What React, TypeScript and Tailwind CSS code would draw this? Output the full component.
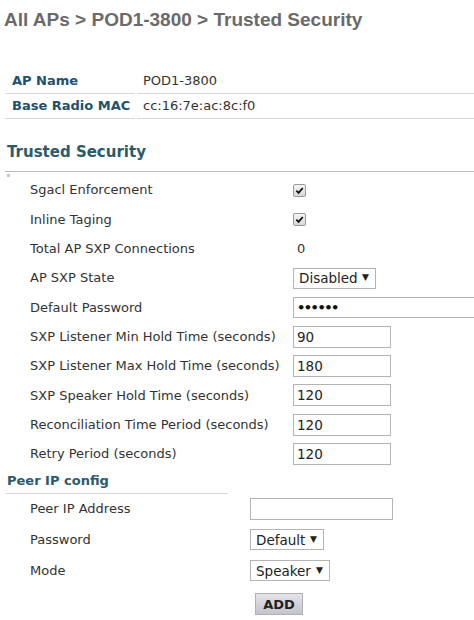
const rows: { label: string; kind: "check" | "text" | "select" | "password" | "input"; value?: string }[] = [
  { label: "Sgacl Enforcement", kind: "check" },
  { label: "Inline Taging", kind: "check" },
  { label: "Total AP SXP Connections", kind: "text", value: "0" },
  { label: "AP SXP State", kind: "select", value: "Disabled" },
  { label: "Default Password", kind: "password", value: "••••••" },
  { label: "SXP Listener Min Hold Time (seconds)", kind: "input", value: "90" },
  { label: "SXP Listener Max Hold Time (seconds)", kind: "input", value: "180" },
  { label: "SXP Speaker Hold Time (seconds)", kind: "input", value: "120" },
  { label: "Reconciliation Time Period (seconds)", kind: "input", value: "120" },
  { label: "Retry Period (seconds)", kind: "input", value: "120" },
];

function Check() {
  return (
    <span className="flex h-[13px] w-[13px] items-center justify-center rounded-[2px] border border-[#9a9a9a] bg-gradient-to-b from-[#f4f4f4] to-[#d8d8d8]">
      <svg viewBox="0 0 10 10" className="h-[9px] w-[9px]">
        <path d="M1.5 5.2 L4 7.6 L8.6 2.2" fill="none" stroke="#111" strokeWidth="2" />
      </svg>
    </span>
  );
}

function Select({ value, w }: { value: string; w: string }) {
  return (
    <span className={`flex h-[21px] ${w} shrink-0 items-center justify-between border border-[#b4b4b4] bg-white pl-[5px] pr-[6px] text-[13.5px] text-[#222]`}>
      {value}
      <span className="text-[9px]">▼</span>
    </span>
  );
}

function Field({ value, w }: { value: string; w: string }) {
  return (
    <span className={`flex h-[22px] ${w} shrink-0 items-center border border-[#b4b4b4] bg-white pl-[3px] text-[13.5px] text-[#222]`}>
      {value}
    </span>
  );
}

export default function App() {
  return (
    <div className="h-[620px] w-[474px] overflow-hidden bg-white font-['DejaVu_Sans',Verdana,sans-serif] text-[13px] text-[#333]">
      <h1 className="pl-[4px] pt-[6px] font-['Liberation_Sans',Arial,sans-serif] text-[19px] font-bold text-[#6a6a6a]">
        All APs &gt; POD1-3800 &gt; Trusted Security
      </h1>

      <div className="mt-[34px] pl-[5px]">
        {[
          ["AP Name", "POD1-3800"],
          ["Base Radio MAC", "cc:16:7e:ac:8c:f0"],
        ].map(([k, v]) => (
          <div key={k} className="flex h-[25px]">
            <div className="flex w-[130px] shrink-0 items-center border-b border-[#d9d9d9] pl-[7px] font-bold text-[#23506b]">{k}</div>
            <div className="ml-[2px] flex flex-1 items-center border-b border-[#d9d9d9] pl-[6px]">{v}</div>
          </div>
        ))}
      </div>

      <div className="ml-[5px] mt-[25px] flex h-[28px] items-end border-b border-[#bdbdbd] pb-[7px] pl-[2px] text-[15px] font-bold text-[#2b5a6b]">
        Trusted Security
      </div>
      <div className="ml-[7px] mt-[2px] h-[3px] w-[3px] bg-[#c8c8c8]" />

      <div className="-mt-[1px]">
        {rows.map((r) => (
          <div key={r.label} className="flex h-[29.33px] items-center">
            <div className="w-[293px] shrink-0 pl-[30px]">{r.label}</div>
            {r.kind === "check" && <Check />}
            {r.kind === "text" && <span className="pl-[4px]">{r.value}</span>}
            {r.kind === "select" && <Select value={r.value!} w="w-[83px]" />}
            {r.kind === "password" && (
              <span className="flex h-[21px] w-[200px] shrink-0 items-center border border-[#b4b4b4] bg-white pl-[3px] text-[13px] font-bold tracking-[-1.5px] text-[#111]">
                ••••••
              </span>
            )}
            {r.kind === "input" && <Field value={r.value!} w="w-[98px]" />}
          </div>
        ))}
      </div>

      <div className="ml-[5px] mt-[2px] w-[223px] border-b border-[#d9d9d9] pb-[3px] pl-[2px] text-[13px] font-bold text-[#2b5a6b]">
        Peer IP config
      </div>

      <div className="-mt-[1px]">
        <div className="flex h-[31px] items-center">
          <div className="w-[250px] shrink-0 pl-[30px]">Peer IP Address</div>
          <Field value="" w="w-[143px]" />
        </div>
        <div className="flex h-[31px] items-center">
          <div className="w-[250px] shrink-0 pl-[30px]">Password</div>
          <Select value="Default" w="w-[74px]" />
        </div>
        <div className="flex h-[31px] items-center">
          <div className="w-[250px] shrink-0 pl-[30px]">Mode</div>
          <Select value="Speaker" w="w-[80px]" />
        </div>
        <div className="mt-[7px] pl-[255px]">
          <button className="h-[22px] w-[48px] border border-[#b0b0b0] bg-gradient-to-b from-[#e4e4ea] to-[#c4c4cc] text-[13px] font-bold text-[#222]">
            ADD
          </button>
        </div>
      </div>
    </div>
  );
}
